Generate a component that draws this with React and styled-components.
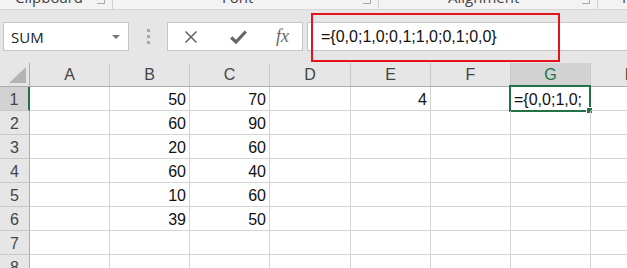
import React from "react";
import styled, { createGlobalStyle } from "styled-components";

const GlobalStyle = createGlobalStyle`
  html, body {
    margin: 0;
    padding: 0;
    background: #ffffff;
    overflow: hidden;
  }
  body {
    font-family: "Liberation Sans", Arial, sans-serif;
  }
`;

const Page = styled.div`
  width: 627px;
  height: 268px;
  overflow: hidden;
  display: flex;
  flex-direction: column;
`;

const RibbonStrip = styled.div`
  height: 9px;
  background: #f3f3f3;
  border-bottom: 1px solid #d6d6d6;
  display: flex;
  overflow: hidden;
  flex-shrink: 0;
`;

const Group = styled.div`
  width: ${(p) => p.width}px;
  flex-shrink: 0;
  display: flex;
  align-items: flex-start;
  border-right: ${(p) => (p.last ? "none" : "1px solid #d2d2d2")};
  box-sizing: border-box;
  padding-left: ${(p) => p.labelAt}px;
`;

const GroupLabel = styled.span`
  font-family: "Open Sans", "Noto Sans", sans-serif;
  font-size: 15px;
  line-height: 15px;
  color: #444;
  margin-top: -10px;
  white-space: nowrap;
`;

const Launcher = styled.span`
  margin-left: auto;
  margin-right: ${(p) => p.right}px;
  margin-top: -4px;
  width: 7px;
  height: 7px;
  border-right: 1px solid #a8a8a8;
  border-bottom: 1px solid #a8a8a8;
`;

const FormulaBar = styled.div`
  height: 53px;
  background: #e6e6e6;
  display: flex;
  align-items: flex-start;
  padding-top: 12px;
  box-sizing: border-box;
  flex-shrink: 0;
`;

const NameBox = styled.div`
  margin-left: 3px;
  width: 126px;
  height: 29px;
  box-sizing: border-box;
  background: #fff;
  border: 1px solid #c6c6c6;
  display: flex;
  align-items: center;
  padding: 0 8px 0 7px;
  font-family: "Open Sans", "Noto Sans", sans-serif;
  font-size: 15px;
  color: #222;
`;

const DropArrow = styled.span`
  margin-left: auto;
  width: 0;
  height: 0;
  border-left: 4px solid transparent;
  border-right: 4px solid transparent;
  border-top: 4px solid #777;
`;

const Grip = styled.div`
  width: 38px;
  height: 29px;
  display: flex;
  flex-direction: column;
  align-items: center;
  justify-content: center;
  gap: 3px;
`;

const GripDot = styled.span`
  width: 3px;
  height: 3px;
  background: #a8a8a8;
`;

const ButtonBox = styled.div`
  width: 136px;
  height: 29px;
  box-sizing: border-box;
  background: #fff;
  border: 1px solid #c6c6c6;
  display: flex;
  align-items: center;
  padding-left: 13px;
`;

const IconSlot = styled.span`
  width: ${(p) => p.w}px;
  display: flex;
  justify-content: center;
  align-items: center;
`;

const Fx = styled.span`
  font-family: "Liberation Serif", "Times New Roman", serif;
  font-style: italic;
  font-size: 18px;
  color: #666;
`;

const FormulaInput = styled.div`
  position: relative;
  margin-left: 4px;
  flex: 1;
  height: 29px;
  box-sizing: border-box;
  background: #fff;
  border: 1px solid #c6c6c6;
  border-right: none;
  display: flex;
  align-items: center;
  padding: 1px 0 0 13px;
  font-size: 16px;
  color: #111;
  white-space: nowrap;
`;

const Highlight = styled.div`
  position: absolute;
  left: 3px;
  top: -10px;
  width: 249px;
  height: 49px;
  box-sizing: border-box;
  border: 2px solid #e3141e;
  pointer-events: none;
`;

const Sheet = styled.div`
  display: grid;
  grid-template-columns: 30px 80px 80px 80px 81px 80px 80px 80px 80px;
  grid-auto-rows: 24px;
`;

const Corner = styled.div`
  background: #e6e6e6;
  border-right: 1px solid #ababab;
  border-bottom: 1px solid #ababab;
  box-sizing: border-box;
  display: flex;
  align-items: flex-end;
  justify-content: flex-end;
  padding: 0 3px 3px 0;
`;

const ColHead = styled.div`
  background: ${(p) => (p.active ? "#d2d2d2" : "#e6e6e6")};
  border-right: 1px solid #c8c8c8;
  border-bottom: ${(p) => (p.active ? "2px solid #217346" : "1px solid #ababab")};
  box-sizing: border-box;
  display: flex;
  align-items: center;
  justify-content: center;
  padding-top: 1px;
  font-size: 16px;
  color: ${(p) => (p.active ? "#217346" : "#444")};
`;

const RowHead = styled.div`
  background: ${(p) => (p.active ? "#d2d2d2" : "#e6e6e6")};
  border-right: ${(p) => (p.active ? "2px solid #217346" : "1px solid #ababab")};
  border-bottom: 1px solid #c8c8c8;
  box-sizing: border-box;
  display: flex;
  align-items: center;
  justify-content: center;
  padding-top: 2px;
  font-size: 16px;
  color: #444;
`;

const Cell = styled.div`
  position: relative;
  border-right: 1px solid #d4d4d4;
  border-bottom: 1px solid #d4d4d4;
  box-sizing: border-box;
  display: flex;
  align-items: center;
  justify-content: ${(p) => (p.text ? "flex-start" : "flex-end")};
  padding: 2px 3px 0 ${(p) => (p.text ? "3px" : "0")};
  font-size: 16px;
  color: #111;
  white-space: nowrap;
  overflow: ${(p) => (p.selected ? "visible" : "hidden")};
`;

const Selection = styled.div`
  position: absolute;
  left: -2px;
  top: -2px;
  right: -1px;
  bottom: -2px;
  border: 2px solid #217346;
  pointer-events: none;
`;

const Handle = styled.div`
  position: absolute;
  right: -4px;
  bottom: -4px;
  width: 5px;
  height: 5px;
  background: #217346;
  border: 1px solid #fff;
`;

const cols = ["A", "B", "C", "D", "E", "F", "G", "H"];
const data = [
  { B: 50, C: 70, E: 4, G: "={0,0;1,0;" },
  { B: 60, C: 90 },
  { B: 20, C: 60 },
  { B: 60, C: 40 },
  { B: 10, C: 60 },
  { B: 39, C: 50 },
  {},
  {},
];

export default function App() {
  return (
    <Page>
      <GlobalStyle />
      <RibbonStrip>
        <Group width={113} labelAt={15}>
          <GroupLabel>Clipboard</GroupLabel>
          <Launcher right={7} />
        </Group>
        <Group width={266} labelAt={109}>
          <GroupLabel>Font</GroupLabel>
          <Launcher right={7} />
        </Group>
        <Group width={219} labelAt={69}>
          <GroupLabel>Alignment</GroupLabel>
          <Launcher right={7} />
        </Group>
        <Group width={60} labelAt={24} last>
          <GroupLabel>Number</GroupLabel>
        </Group>
      </RibbonStrip>
      <FormulaBar>
        <NameBox>
          SUM
          <DropArrow />
        </NameBox>
        <Grip>
          <GripDot />
          <GripDot />
          <GripDot />
        </Grip>
        <ButtonBox>
          <IconSlot w={20}>
            <svg width="14" height="14" viewBox="0 0 14 14">
              <path d="M1.5 1.5 L12.5 12.5 M12.5 1.5 L1.5 12.5" stroke="#666" strokeWidth="1.6" fill="none" />
            </svg>
          </IconSlot>
          <IconSlot w={74}>
            <svg width="17" height="14" viewBox="0 0 17 14">
              <path d="M1.2 7.5 L6 12 L15.8 1.5" stroke="#666" strokeWidth="3.2" fill="none" strokeLinejoin="miter" />
            </svg>
          </IconSlot>
          <IconSlot w={15}>
            <Fx>fx</Fx>
          </IconSlot>
        </ButtonBox>
        <FormulaInput>
          {"={0,0;1,0;0,1;1,0;0,1;0,0}"}
          <Highlight />
        </FormulaInput>
      </FormulaBar>
      <Sheet>
        <Corner>
          <svg width="17" height="16" viewBox="0 0 17 16">
            <polygon points="17,0 17,16 0,16" fill="#b4b4b4" />
          </svg>
        </Corner>
        {cols.map((c) => (
          <ColHead key={c} active={c === "G"}>
            {c}
          </ColHead>
        ))}
        {data.map((row, i) => (
          <React.Fragment key={i}>
            <RowHead active={i === 0}>{i + 1}</RowHead>
            {cols.map((c) => {
              const v = row[c];
              const selected = i === 0 && c === "G";
              return (
                <Cell key={c} text={typeof v === "string"} selected={selected}>
                  {v}
                  {selected && (
                    <Selection>
                      <Handle />
                    </Selection>
                  )}
                </Cell>
              );
            })}
          </React.Fragment>
        ))}
      </Sheet>
    </Page>
  );
}
